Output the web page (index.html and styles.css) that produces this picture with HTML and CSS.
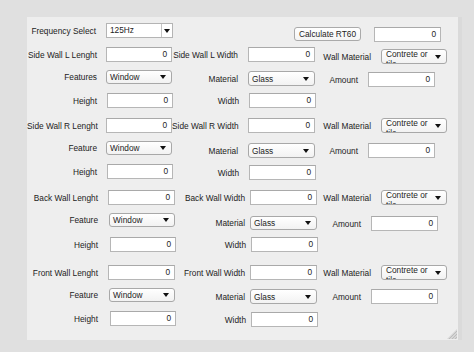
FILE: index.html
```html
<!DOCTYPE html>
<html>
<head>
<meta charset="utf-8">
<link rel="stylesheet" href="styles.css">
</head>
<body>
<div class="window">
  <div class="panel">
    <div class="row h24">
      <div class="pair">
        <span class="lab lf">Frequency Select</span>
        <div class="freq"><span class="ftxt">125Hz</span><span class="fbtn"><span class="arrow"></span></span></div>
      </div>
      <div class="btn mt4">Calculate RT60</div>
      <div class="field fres mt4">0</div>
    </div>

    <div class="sec a">
      <div class="row h23">
        <div class="pair"><span class="lab l1">Side Wall L Lenght</span><div class="field c1">0</div></div>
        <div class="pair"><span class="lab l2">Side Wall L Width</span><div class="field c2">0</div></div>
        <div class="pair mt2"><span class="lab lwm">Wall Material</span><div class="popup cwm"><span class="wrap">Contrete or tile</span><span class="arrow"></span></div></div>
      </div>
      <div class="row h23">
        <div class="pair"><span class="lab l1">Features</span><div class="popup c1 short"><span>Window</span><span class="arrow"></span></div></div>
        <div class="pair mt1"><span class="lab l2">Material</span><div class="popup c2"><span>Glass</span><span class="arrow"></span></div></div>
        <div class="pair mt2"><span class="lab lam">Amount</span><div class="field cam">0</div></div>
      </div>
      <div class="row h25">
        <div class="pair"><span class="lab l1">Height</span><div class="field c1 nudge">0</div></div>
        <div class="pair"><span class="lab l2">Width</span><div class="field c2">0</div></div>
      </div>
    </div>

    <div class="sec a">
      <div class="row h22">
        <div class="pair"><span class="lab l1">Side Wall R Lenght</span><div class="field c1">0</div></div>
        <div class="pair"><span class="lab l2">Side Wall R Width</span><div class="field c2">0</div></div>
        <div class="pair"><span class="lab lwm">Wall Material</span><div class="popup cwm"><span class="wrap">Contrete or tile</span><span class="arrow"></span></div></div>
      </div>
      <div class="row h24">
        <div class="pair mt1"><span class="lab l1">Feature</span><div class="popup c1 short"><span>Window</span><span class="arrow"></span></div></div>
        <div class="pair mt3"><span class="lab l2">Material</span><div class="popup c2"><span>Glass</span><span class="arrow"></span></div></div>
        <div class="pair mt3"><span class="lab lam">Amount</span><div class="field cam">0</div></div>
      </div>
      <div class="row h26">
        <div class="pair"><span class="lab l1">Height</span><div class="field c1 nudge">0</div></div>
        <div class="pair mt1"><span class="lab l2">Width</span><div class="field c2">0</div></div>
      </div>
    </div>

    <div class="sec b">
      <div class="row h23">
        <div class="pair"><span class="lab l1">Back Wall Lenght</span><div class="field c1">0</div></div>
        <div class="pair"><span class="lab l2">Back Wall Width</span><div class="field c2">0</div></div>
        <div class="pair"><span class="lab lwm">Wall Material</span><div class="popup cwm"><span class="wrap">Contrete or tile</span><span class="arrow"></span></div></div>
      </div>
      <div class="row h24">
        <div class="pair"><span class="lab l1">Feature</span><div class="popup c1 short nudge1"><span>Window</span><span class="arrow"></span></div></div>
        <div class="pair mt3"><span class="lab l2">Material</span><div class="popup c2 short"><span>Glass</span><span class="arrow"></span></div></div>
        <div class="pair mt3"><span class="lab lam">Amount</span><div class="field cam">0</div></div>
      </div>
      <div class="row h28">
        <div class="pair"><span class="lab l1">Height</span><div class="field c1 nudge2">0</div></div>
        <div class="pair"><span class="lab l2">Width</span><div class="field c2">0</div></div>
      </div>
    </div>

    <div class="sec b">
      <div class="row h23">
        <div class="pair"><span class="lab l1">Front Wall Lenght</span><div class="field c1">0</div></div>
        <div class="pair"><span class="lab l2">Front Wall Width</span><div class="field c2">0</div></div>
        <div class="pair"><span class="lab lwm">Wall Material</span><div class="popup cwm"><span class="wrap">Contrete or tile</span><span class="arrow"></span></div></div>
      </div>
      <div class="row h23">
        <div class="pair"><span class="lab l1">Feature</span><div class="popup c1 short nudge1"><span>Window</span><span class="arrow"></span></div></div>
        <div class="pair mt1"><span class="lab l2">Material</span><div class="popup c2"><span>Glass</span><span class="arrow"></span></div></div>
        <div class="pair mt1"><span class="lab lam">Amount</span><div class="field cam">0</div></div>
      </div>
      <div class="row h15">
        <div class="pair"><span class="lab l1">Height</span><div class="field c1 nudge2">0</div></div>
        <div class="pair mt1"><span class="lab l2">Width</span><div class="field c2">0</div></div>
      </div>
    </div>

    <svg class="grip" width="10" height="10" viewBox="0 0 10 10">
      <polygon points="10,0 10,10 0,10" fill="#d6d6d6"/>
      <line x1="10" y1="2" x2="2" y2="10" stroke="#bdbdbd" stroke-width="1"/>
      <line x1="10" y1="5" x2="5" y2="10" stroke="#bdbdbd" stroke-width="1"/>
      <line x1="10" y1="8" x2="8" y2="10" stroke="#bdbdbd" stroke-width="1"/>
    </svg>
  </div>
</div>
</body>
</html>
```
FILE: styles.css
```css
html, body {
  margin: 0;
  padding: 0;
}
body {
  width: 474px;
  height: 352px;
  overflow: hidden;
  background: #e0e0e0;
  font-family: "Liberation Sans", Arial, sans-serif;
  font-size: 8.3px;
  color: #1c1c1c;
}
.window {
  padding: 17px 0 0 27px;
}
.panel {
  position: relative;
  width: 431px;
  height: 323px;
  box-sizing: border-box;
  padding-top: 6px;
  background: #eeeeee;
  box-shadow: 4px 0 0 #dadada;
}
.row {
  display: flex;
  align-items: flex-start;
}
.h15 { height: 15px; }
.h22 { height: 22px; }
.h23 { height: 23px; }
.h24 { height: 24px; }
.h25 { height: 25px; }
.h26 { height: 26px; }
.h28 { height: 28px; }
.mt1 { margin-top: 1px; }
.mt2 { margin-top: 2px; }
.mt3 { margin-top: 3px; }
.mt4 { margin-top: 4px; }

.pair {
  display: flex;
  align-items: center;
}
.lab {
  display: block;
  text-align: right;
  white-space: nowrap;
  line-height: 10px;
}

/* first row */
.lf { width: 69px; margin-right: 10px; }
.freq {
  display: flex;
  width: 67px;
  height: 15px;
  box-sizing: border-box;
  border: 1px solid #b4b4b4;
  background: #fff;
}
.ftxt {
  flex: 1;
  padding-left: 3px;
  line-height: 13px;
}
.fbtn {
  width: 10px;
  border-left: 1px solid #c4c4c4;
  display: flex;
  align-items: center;
  justify-content: center;
}
.btn {
  width: 67px;
  height: 14px;
  margin-left: 121px;
  box-sizing: border-box;
  border: 1px solid #aaaaaa;
  border-radius: 3px;
  background: linear-gradient(#ffffff, #f4f4f4);
  text-align: center;
  line-height: 12px;
}
.fres { width: 67px; height: 14px; margin-left: 13px; line-height: 12px; }

/* controls */
.field {
  height: 15px;
  box-sizing: border-box;
  border: 1px solid #b6b6b6;
  border-top-color: #a9a9a9;
  background: #ffffff;
  text-align: right;
  padding-right: 4px;
  line-height: 13px;
}
.popup {
  display: flex;
  align-items: center;
  justify-content: space-between;
  height: 15px;
  box-sizing: border-box;
  border: 1px solid #a8a8a8;
  border-radius: 3px;
  background: linear-gradient(#ffffff, #f2f2f2);
  padding: 0 5px 0 3px;
  line-height: 10px;
}
.popup.short { height: 14px; }
.arrow {
  width: 0;
  height: 0;
  border-left: 3px solid transparent;
  border-right: 3px solid transparent;
  border-top: 4px solid #111;
  flex: none;
}
.cwm {
  width: 66px;
  align-items: flex-start;
}
.cwm .arrow { margin-top: 5px; }
.wrap {
  display: block;
  width: 46px;
  height: 13px;
  overflow: hidden;
  line-height: 9.5px;
  padding-left: 1px;
  white-space: normal;
}

/* sections 1 & 2 */
.a .l1 { width: 70px; margin-right: 9px; }
.a .c1 { width: 66px; }
.a .l2 { width: 66px; margin-right: 10px; }
.a .c2 { width: 67px; }
.a .lwm { width: 56px; margin-right: 10px; }
.a .lam { width: 43px; margin-right: 10px; }
.a .cam { width: 67px; }
.a .nudge { margin-left: 1px; }

/* sections 3 & 4 */
.b .l1 { width: 71px; margin-right: 10px; }
.b .c1 { width: 67px; }
.b .l2 { width: 70px; margin-right: 5px; }
.b .c2 { width: 67px; }
.b .lwm { width: 54px; margin-right: 10px; }
.b .lam { width: 44px; margin-right: 10px; }
.b .cam { width: 67px; }
.b .nudge1 { margin-left: 1px; width: 66px; }
.b .nudge2 { margin-left: 2px; width: 66px; }

.grip {
  position: absolute;
  right: 1px;
  bottom: 1px;
}
```
